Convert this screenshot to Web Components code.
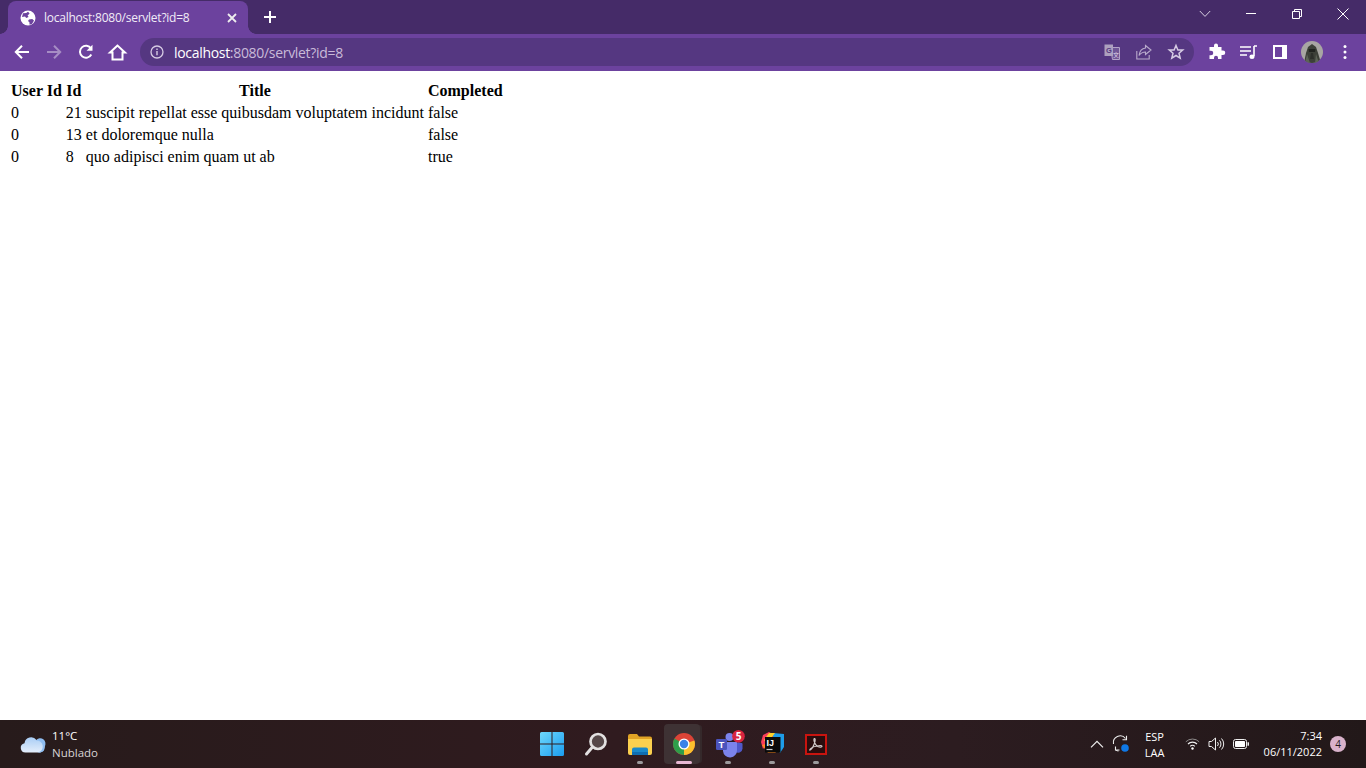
<!DOCTYPE html>
<html lang="es"><head><meta charset="utf-8"><title>localhost:8080/servlet?id=8</title>
<style>
html,body{margin:0;padding:0;height:100%;overflow:hidden}
body{background:#fff}
browser-window{height:100vh}
</style></head><body>
<browser-window>
  <tab-strip slot="chrome"></tab-strip>
  <nav-toolbar slot="chrome"></nav-toolbar>
  <todo-table></todo-table>
  <win-taskbar slot="bar"></win-taskbar>
</browser-window>
<script>
const S=(w,h,vb,inner)=>`<svg width="${w}" height="${h}" viewBox="${vb}" xmlns="http://www.w3.org/2000/svg" style="display:block;overflow:visible;flex:none">${inner}</svg>`;
function def(name,html){customElements.define(name,class extends HTMLElement{constructor(){super();this.attachShadow({mode:'open'}).innerHTML=typeof html==='function'?html(this):html;}});}

def('browser-window',`<style>:host{display:flex;flex-direction:column;font-family:"Liberation Serif",serif}
main{flex:1;min-height:0;padding:8px;background:#fff}</style>
<slot name="chrome"></slot><main><slot></slot></main><slot name="bar"></slot>`);

def('tool-btn',el=>`<style>:host{display:flex;align-items:center;justify-content:center;width:${el.getAttribute('w')||32}px;height:32px;flex:none}</style><slot></slot>`);

def('tab-strip',`<style>
:host{display:flex;height:34px;background:#452b68;color:#fff;font:12px "Open Sans",sans-serif;align-items:stretch}
.tab{position:relative;margin-left:8px;width:240px;background:#6c429e;border-radius:8px 8px 0 0;display:flex;align-items:center;padding:0 0 0 12px;box-sizing:border-box;margin-top:1px}
.tab::before,.tab::after{content:"";position:absolute;bottom:0;width:8px;height:8px}
.tab::before{left:-8px;background:radial-gradient(circle at 0 0,transparent 7.5px,#6c429e 8px)}
.tab::after{right:-8px;background:radial-gradient(circle at 100% 0,transparent 7.5px,#6c429e 8px)}
.title{margin-left:8px;flex:1;white-space:nowrap;letter-spacing:-.24px;color:#f1ecf7}
.x{width:24px;display:flex;justify-content:center;margin-right:4px}
.plus{margin-left:8px;width:28px;display:flex;align-items:center;justify-content:center}
.spacer{flex:1}
.ctl{width:46px;display:flex;align-items:center;justify-content:center;margin-top:-6px}
</style>
<div class="tab">${S(16,16,'0 0 16 16','<circle cx="8" cy="8" r="7.5" fill="#fff"/><path d="M3 3.2 6.2 3 8 1.8 9.6 3.4 7.6 5.4 8.6 7 6.2 8 5 6.6 2 7ZM9 9.5l3.2-.5 1.8 1.5-2 3.5-2.4.8-.2-2.6-1.4-1.2Z" fill="#6c429e"/>')}
<span class="title">localhost:8080/servlet?id=8</span>
<span class="x">${S(10,10,'0 0 10 10','<path d="M1 1l8 8M9 1l-8 8" stroke="#eee" stroke-width="1.8"/>')}</span></div>
<span class="plus">${S(14,14,'0 0 14 14','<path d="M7 1v12M1 7h12" stroke="#fff" stroke-width="2"/>')}</span>
<span class="spacer"></span>
<span class="ctl">${S(12,8,'0 0 12 8','<path d="M.8 1 6 6.4 11.2 1" fill="none" stroke="#d8d0e2" stroke-width="1"/>')}</span>
<span class="ctl">${S(10,2,'0 0 10 2','<path d="M0 .5h10" stroke="#fff" stroke-width="1"/>')}</span>
<span class="ctl">${S(10,10,'0 0 10 10','<path d="M.5 2.5h7v7h-7zM2.5 2.5v-2h7v7h-2" fill="none" stroke="#fff"/>')}</span>
<span class="ctl">${S(12,12,'0 0 12 12','<path d="M.5.5l11 11M11.5.5l-11 11" stroke="#fff" stroke-width="1"/>')}</span>`);

def('nav-toolbar',`<style>
:host{display:flex;height:37px;box-sizing:border-box;background:#6c429e;align-items:center;padding:0 4px 1px 6px;color:#fff}
.home{margin-left:-1px}
.omni{flex:1;margin:0 6px 0 7px;height:28px;border-radius:14px;background:#553781;display:flex;align-items:center;font:14px "Open Sans",sans-serif;padding:0 2px 0 10px;min-width:0}
.url{margin-left:10px;flex:1;white-space:nowrap;color:#c9bbd9;letter-spacing:-.31px}
.url b{font-weight:400;color:#fff}
</style>
<tool-btn>${S(16,16,'0 0 16 16','<path d="M15 8H2M8 1.8 1.8 8 8 14.2" fill="none" stroke="#fff" stroke-width="2"/>')}</tool-btn>
<tool-btn>${S(16,16,'0 0 16 16','<path d="M1 8h13M8 1.8 14.2 8 8 14.2" fill="none" stroke="#a68dc4" stroke-width="2"/>')}</tool-btn>
<tool-btn>${S(16,16,'0 0 16 16','<path d="M13.3 10.5A6 6 0 1 1 13 4.5" fill="none" stroke="#fff" stroke-width="2"/><path d="M14.5.8v6h-6z" fill="#fff"/>')}</tool-btn>
<tool-btn class="home">${S(17,17,'0 0 17 17','<path d="M8.5 1.5 1 8.5h2.5v7h10v-7H16z" fill="none" stroke="#fff" stroke-width="2"/>')}</tool-btn>
<div class="omni">
${S(14,14,'0 0 14 14','<circle cx="7" cy="7" r="6" fill="none" stroke="#d6cbe3" stroke-width="1.3"/><path d="M7 6v4.200M7 3.500v1.500" stroke="#d6cbe3" stroke-width="1.400"/>')}
<span class="url"><b>localhost</b>:8080/servlet?id=8</span>
<tool-btn>${S(16,16,'0 0 16 16','<path d="M6.500 3.500H15.500V15.500H8.500z" fill="#6f5596" stroke="#b3a3c8"/><path d="M.5.5h8.500v11.500H.5z" fill="#ada0bf"/><text x="4.800" y="9" font-size="7.500" font-weight="700" font-family="Liberation Sans" fill="#553781" text-anchor="middle">G</text><text x="12" y="12.500" font-size="6" font-family="Noto Sans CJK SC" fill="#e0d8ea" text-anchor="middle">文</text>')}</tool-btn>
<tool-btn>${S(16,16,'0 0 16 16','<path d="M.8 7v8h12.400v-4" fill="none" stroke="#b9abcc" stroke-width="1.100"/><path d="M9.500 1.500 15 6l-5.500 4.500V8C6 8 4.500 9.500 3 11.500 3.500 8 5.500 4.500 9.500 4z" fill="none" stroke="#b9abcc" stroke-width="1.100"/>')}</tool-btn>
<tool-btn>${S(16,16,'0 0 16 16','<path d="M8 1.500 9.900 6h4.800l-3.700 3.200 1.200 4.900L8 11.500l-4.200 2.600L5 9.200 1.300 6h4.800z" fill="none" stroke="#d6cbe3" stroke-width="1.500"/>')}</tool-btn>
</div>
<tool-btn>${S(16,16,'0 0 16 16','<path d="M6 1.500a2 2 0 0 1 4 0V3h3.500v3.500H15a2.200 2.200 0 0 1 0 4.500h-1.500v4H10v-1.200a2 2 0 0 0-4 0V15H1.500v-3.800H3a2.200 2.200 0 0 0 0-4.500H1.500V3H6z" fill="#fff"/>')}</tool-btn>
<tool-btn>${S(17,15,'0 0 17 15','<path d="M0 2h11M0 6h11M0 10h7" stroke="#fff" stroke-width="1.300"/><path d="M14 1h3M14 1v10" stroke="#fff" stroke-width="1.600" fill="none"/><ellipse cx="12" cy="11.800" rx="2.600" ry="2.200" fill="#fff"/>')}</tool-btn>
<tool-btn>${S(14,14,'0 0 14 14','<path d="M0 0h14v14H0z" fill="#fff"/><path d="M2 2h7v10H2z" fill="#6c429e"/>')}</tool-btn>
<tool-btn>${S(22,22,'0 0 22 22','<clipPath id="av"><circle cx="11" cy="11" r="11"/></clipPath><g clip-path="url(#av)"><rect width="22" height="22" fill="#a8a6a3"/><path d="M3 22 5 12 7 6l4-3 4 3 2 6 3 10z" fill="#3c4038"/><path d="M7.500 8h7l-.5 3h-6z" fill="#20231f"/><path d="M6 13l3 9H4zM15 13l3 9h-4z" fill="#5c6357"/><path d="M10 12h2l1 6h-4z" fill="#2c2f2a"/></g>')}</tool-btn>
<tool-btn w="34">${S(4,16,'0 0 4 16','<circle cx="2" cy="2.500" r="1.500" fill="#fff"/><circle cx="2" cy="8" r="1.500" fill="#fff"/><circle cx="2" cy="13.500" r="1.500" fill="#fff"/>')}</tool-btn>`);

const rows=[[0,21,'suscipit repellat esse quibusdam voluptatem incidunt','false'],[0,13,'et doloremque nulla','false'],[0,8,'quo adipisci enim quam ut ab','true']];
def('todo-table',`<style>:host{display:block;font:16px "Liberation Serif","Times New Roman",serif;color:#000}
table{border-collapse:separate;border-spacing:2px;font:inherit}td,th{padding:1px}</style>
<table><thead><tr><th>User Id</th><th>Id</th><th>Title</th><th>Completed</th></tr></thead>
<tbody>${rows.map(r=>`<tr>${r.map(c=>`<td>${c}</td>`).join('')}</tr>`).join('')}</tbody></table>`);

def('task-icon',el=>`<style>:host{position:relative;display:flex;align-items:center;justify-content:center;width:44px;height:48px;flex:none}
.pip{position:absolute;left:50%;bottom:4px;margin-left:-3px;width:6px;height:3px;border-radius:2px;background:#9c9a9c}
.pip[hidden]{display:none}
.box{display:none}
:host([active]) .box{display:block;position:absolute;left:2px;top:4px;width:36px;height:40px;border-radius:4px;background:#3e3234;box-shadow:3px 0 0 -1px #35292b}
:host([active]) .pip{width:16px;margin-left:-8px;background:#e9b8d4}
::slotted(*){position:relative}</style><span class="box"></span><slot></slot><span class="pip" ${el.hasAttribute('nopip')?'hidden':''}></span>`);

def('win-taskbar',`<style>
:host{display:grid;grid-template-columns:1fr auto 1fr;height:48px;background:linear-gradient(90deg,#271b1b,#301b1f 45%,#2c1c20 70%,#221819);color:#fff;font:11.5px "Open Sans",sans-serif;align-items:center}
.l{display:flex;align-items:center;padding-left:20px;gap:7px;line-height:16px}
.l div{padding-top:1px}
.l small{font-size:11.5px;color:#d8d4d4;display:block;margin-top:1px}
.c{display:flex;padding-left:2px}
.r{display:flex;align-items:center;justify-content:flex-end}
.chev{margin-right:7px}
.lang{text-align:center;line-height:16px;font-size:11px;margin:0 18px 0 12px;width:24px;padding-top:1px}
.clock{text-align:right;line-height:16px;font-size:11px;margin-left:15px;white-space:nowrap}
.sys{display:flex;gap:8px;align-items:center}
.badge{width:16px;height:16px;border-radius:50%;background:#d9b2cb;color:#231a1c;font-size:10px;display:flex;align-items:center;justify-content:center;margin:0 20px 0 8px}
</style>
<div class="l">${S(25,17,'0 0 25 17','<defs><linearGradient id="cl" x1="0" y1="0" x2="0" y2="1"><stop offset="0" stop-color="#a9cdf5"/><stop offset="1" stop-color="#e4eefb"/></linearGradient></defs><path d="M5.500 16.500a4.700 4.700 0 0 1-1-9.300A6.700 6.700 0 0 1 16.500 4 5.500 5.500 0 0 1 20 16.500z" fill="url(#cl)"/><path d="M16 4.500A5.200 5.500 0 0 1 24.500 11a5 5 0 0 1-4 5.500h-3a6 6 0 0 0-1.500-12z" fill="#8fbdf0"/>')}
<div>11°C<small>Nublado</small></div></div>
<div class="c">
<task-icon nopip>${S(24,24,'0 0 24 24','<defs><linearGradient id="w" x1="0" y1="0" x2="1" y2="1"><stop offset="0" stop-color="#6fd8fb"/><stop offset="1" stop-color="#1a9df0"/></linearGradient></defs><path d="M1.500 0H11.500V11.500H0V1.500A1.500 1.500 0 0 1 1.500 0ZM12.500 0H22.500A1.500 1.500 0 0 1 24 1.500V11.500H12.500ZM0 12.500H11.500V24H1.500A1.500 1.500 0 0 1 0 22.500ZM12.500 12.500H24V22.500A1.500 1.500 0 0 1 22.500 24H12.500Z" fill="url(#w)"/>')}</task-icon>
<task-icon nopip>${S(24,24,'0 0 24 24','<circle cx="14" cy="9.500" r="7.500" fill="#564849" stroke="#e3e1e1" stroke-width="2.700"/><path d="M8.500 15 2.500 22" stroke="#e3e1e1" stroke-width="3" stroke-linecap="round"/>')}</task-icon>
<task-icon>${S(24,21,'0 0 24 21','<path d="M0 2a2 2 0 0 1 2-2h7l2 2.500h11a2 2 0 0 1 2 2V8H0z" fill="#e0a325"/><path d="M0 5h24v14a2 2 0 0 1-2 2H2a2 2 0 0 1-2-2z" fill="#fbd04f"/><path d="M6 13.500h12a2 2 0 0 1 2 2V21H4v-5.500a2 2 0 0 1 2-2z" fill="#1a89c9"/><path d="M4 18h16v3H4z" fill="#0f6db0"/>')}</task-icon>
<task-icon active>${S(22,22,'0 0 22 22','<circle cx="11" cy="11" r="11" fill="#db4437"/><path d="M11 11 21.400 7.500A11 11 0 0 1 11 22z" fill="#fbc02d"/><path d="M11 11 11 22A11 11 0 0 1 1.400 5.600z" fill="#2e9e4a"/><circle cx="11" cy="11" r="5.500" fill="#fff"/><circle cx="11" cy="11" r="4.200" fill="#3b82e8"/>')}</task-icon>
<task-icon>${S(33,26,'-3 0 33 26','<circle cx="14.500" cy="6" r="4" fill="#7b83eb"/><circle cx="23.500" cy="9" r="2.800" fill="#5059c9"/><path d="M18 12h8.500a1 1 0 0 1 1 1v4.500a4.500 4.500 0 0 1-7 3.500z" fill="#5059c9"/><path d="M8 11h14v8a7 7 0 0 1-14 1z" fill="#7b83eb"/><rect x="1" y="8" width="11" height="11" rx="1.200" fill="#4b53bc"/><text x="6.500" y="17" font-size="9.500" font-weight="700" font-family="Liberation Sans" fill="#fff" text-anchor="middle">T</text><circle cx="23.500" cy="5.300" r="6.300" fill="#d9243f"/><text x="23.500" y="9" font-size="10" font-weight="700" font-family="Open Sans" fill="#fff" text-anchor="middle">5</text>')}</task-icon>
<task-icon>${S(24,24,'0 0 24 24','<path d="M3 3 9 0 14 3 3 17 1 10z" fill="#fb3e5a"/><path d="M2 13 8 21 16 21 9 11z" fill="#ff8a1f"/><path d="M13 1 24 2 24 15 20 21 13 12z" fill="#1e9ce8"/><path d="M4 8 9 1h6L7 12z" fill="#fcd12a"/><rect x="5" y="5" width="15.500" height="15.500" fill="#0a0a0a"/><text x="6.500" y="13.500" font-size="9" font-weight="700" font-family="Liberation Sans" fill="#fff">IJ</text><path d="M6.500 17.500h6" stroke="#c9c9c9" stroke-width="1.200"/>')}</task-icon>
<task-icon>${S(22,21,'0 0 22 21','<rect x="1" y="1" width="20" height="19" fill="#2a0d0e" stroke="#c9140f" stroke-width="2"/><path d="M5 16c2-1 4-5 5-8.500.3-1.500.2-3-.5-3s-.8 1.500-.3 3c1 3 3 5 5 5.500 1.500.3 3 0 2.800-.8-.2-.8-2.500-.8-5-.2-2.800.6-6 1.800-7 3.300-.5.800 0 1.200 0 .7z" fill="none" stroke="#d6cdcd" stroke-width="1.100"/>')}</task-icon>
</div>
<div class="r">
<span class="chev">${S(14,8,'0 0 14 8','<path d="M1 7.300 7 1.300l6 6" fill="none" stroke="#eee" stroke-width="1.200"/>')}</span>
${S(20,18,'0 0 20 18','<path d="M2.500 9A6.800 6.800 0 0 1 14.500 3.500" fill="none" stroke="#eee" stroke-width="1.100"/><path d="M15.500.8v4h-4M8.500 15H4.500v-3.500" fill="none" stroke="#eee" stroke-width="1.100"/><path d="M4.500 15a6 6 0 0 0 3 1" fill="none" stroke="#eee"/><circle cx="14" cy="13" r="3.800" fill="#0f78e6"/>')}
<div class="lang">ESP<br>LAA</div>
<div class="sys">
${S(15,12,'0 0 15 12','<path d="M.8 3.800a9.500 9.500 0 0 1 13.400 0" fill="none" stroke="#8d8a8a" stroke-width="1"/><path d="M3 6a6.300 6.300 0 0 1 9 0M5.200 8.300a3.200 3.200 0 0 1 4.600 0" fill="none" stroke="#f2f2f2" stroke-width="1.100"/><circle cx="7.500" cy="10.500" r="1.200" fill="#fff"/>')}
${S(17,14,'0 0 17 14','<path d="M1 4.500h2.500L7.500 1v12L3.500 9.500H1z" fill="none" stroke="#eee"/><path d="M9.500 5a3 3 0 0 1 0 4M11.500 3.300a5.500 5.500 0 0 1 0 7.400M13.500 1.500a8 8 0 0 1 0 11" fill="none" stroke="#eee"/>')}
${S(16,10,'0 0 16 10','<rect x=".5" y=".5" width="13" height="9" rx="2" fill="none" stroke="#eee"/><rect x="2" y="2" width="10" height="6" rx=".8" fill="#fff"/><rect x="14.500" y="3.300" width="1.500" height="3.400" fill="#eee"/>')}
</div>
<div class="clock">7:34<br>06/11/2022</div>
<span class="badge">4</span>
</div>`);
</script>
</body></html>
